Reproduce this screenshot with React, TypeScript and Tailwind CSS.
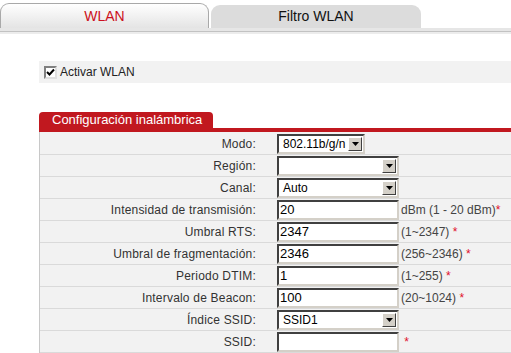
import React from 'react';

// Página de configuración WLAN (router)

const font = { fontFamily: '"Liberation Sans", Arial, sans-serif' };

type Row = {
  label: string;
  kind: 'select' | 'input';
  value: string;
  width?: string;
  unit?: string;
  star?: string;
};

const rows: Row[] = [
  { label: 'Modo:', kind: 'select', value: '802.11b/g/n', width: 'w-[88px]' },
  { label: 'Región:', kind: 'select', value: '' },
  { label: 'Canal:', kind: 'select', value: 'Auto' },
  { label: 'Intensidad de transmisión:', kind: 'input', value: '20', unit: 'dBm (1 - 20 dBm)', star: '*' },
  { label: 'Umbral RTS:', kind: 'input', value: '2347', unit: '(1~2347) ', star: '*' },
  { label: 'Umbral de fragmentación:', kind: 'input', value: '2346', unit: '(256~2346) ', star: '*' },
  { label: 'Periodo DTIM:', kind: 'input', value: '1', unit: '(1~255) ', star: '*' },
  { label: 'Intervalo de Beacon:', kind: 'input', value: '100', unit: '(20~1024) ', star: '*' },
  { label: 'Índice SSID:', kind: 'select', value: 'SSID1' },
  { label: 'SSID:', kind: 'input', value: '', unit: ' ', star: '*' },
];

const Select: React.FC<{ value: string; width?: string }> = ({ value, width = 'w-[122px]' }) => (
  <div
    className={`${width} h-[20px] flex items-stretch bg-white border-2 border-t-[#404040] border-l-[#404040] border-b-[#d4d0c8] border-r-[#d4d0c8]`}
  >
    <div className="flex-1 min-w-0 pl-[4px] text-[12px] leading-[16px] text-black whitespace-nowrap overflow-hidden">
      {value}
    </div>
    <div className="w-[14px] shrink-0 my-[1px] mr-[1px] bg-[#d4d0c8] border border-t-white border-l-white border-b-[#404040] border-r-[#404040] flex items-center justify-center">
      <svg width="7" height="4" viewBox="0 0 7 4">
        <path d="M0 0h7L3.5 4z" fill="#000" />
      </svg>
    </div>
  </div>
);

const TextInput: React.FC<{ value: string }> = ({ value }) => (
  <div className="w-[122px] h-[20px] bg-white border-2 border-t-[#404040] border-l-[#404040] border-b-[#d4d0c8] border-r-[#d4d0c8] pl-[1px] text-[13px] leading-[16px] text-black">
    {value}
  </div>
);

export default function App() {
  return (
    <div className="w-[511px] h-[353px] overflow-hidden bg-white" style={font}>
      {/* pestañas */}
      <div className="flex items-end h-[28px] pt-[3px]">
        <div className="w-[209px] h-[25px] rounded-t-[9px] border border-b-0 border-[#a9a9a9] bg-gradient-to-b from-[#ffffff] to-[#e4e4e4] flex items-center justify-center text-[14px] text-[#cc1020]">
          WLAN
        </div>
        <div className="ml-[2px] w-[210px] h-[23px] rounded-t-[9px] bg-[#dcdcdc] flex items-center justify-center text-[14px] text-[#111]">
          Filtro WLAN
        </div>
      </div>
      <div className="h-[3px] bg-[#e6e6e6]" />
      <div className="h-[1px] bg-[#c2c2c2]" />
      <div className="h-[2px] bg-[#ececec]" />

      {/* activar */}
      <div className="mt-[27px] ml-[39px] h-[22px] bg-[#f2f2f2] flex items-center">
        <div className="ml-[5px] w-[13px] h-[13px] bg-white border-2 border-t-[#808080] border-l-[#808080] border-b-[#e0e0e0] border-r-[#e0e0e0] flex items-center justify-center">
          <svg width="9" height="9" viewBox="0 0 9 9">
            <path d="M1 4l2.5 2.5L8 1.5" stroke="#000" strokeWidth="2" fill="none" />
          </svg>
        </div>
        <span className="ml-[3px] text-[12px] text-[#222]">Activar WLAN</span>
      </div>

      {/* configuración inalámbrica */}
      <div className="mt-[29px] ml-[39px]">
        <div className="w-[174px] h-[16px] rounded-t-[4px] bg-[#c1181f] pl-[13px] text-[13px] leading-[16px] text-white">
          Configuración inalámbrica
        </div>
        <div className="h-[4px] bg-[#c1181f]" />
        <div className="border-l border-[#c8c8c8] bg-[#f2f2f2] pt-[1px]">
          {rows.map((r) => (
            <div key={r.label} className="h-[22px] flex items-center border-b border-[#dadada]">
              <div className="w-[216px] text-right text-[12px] text-[#333] tracking-[0.2px] shrink-0">
                {r.label}
              </div>
              <div className="ml-[21px] flex items-center">
                {r.kind === 'select' ? (
                  <Select value={r.value} width={r.width} />
                ) : (
                  <TextInput value={r.value} />
                )}
                {r.unit !== undefined && (
                  <span className="ml-[2px] text-[12px] text-[#444] whitespace-pre">
                    {r.unit}
                    <span className="text-[#e0102a]">{r.star}</span>
                  </span>
                )}
              </div>
            </div>
          ))}
        </div>
      </div>
    </div>
  );
}
